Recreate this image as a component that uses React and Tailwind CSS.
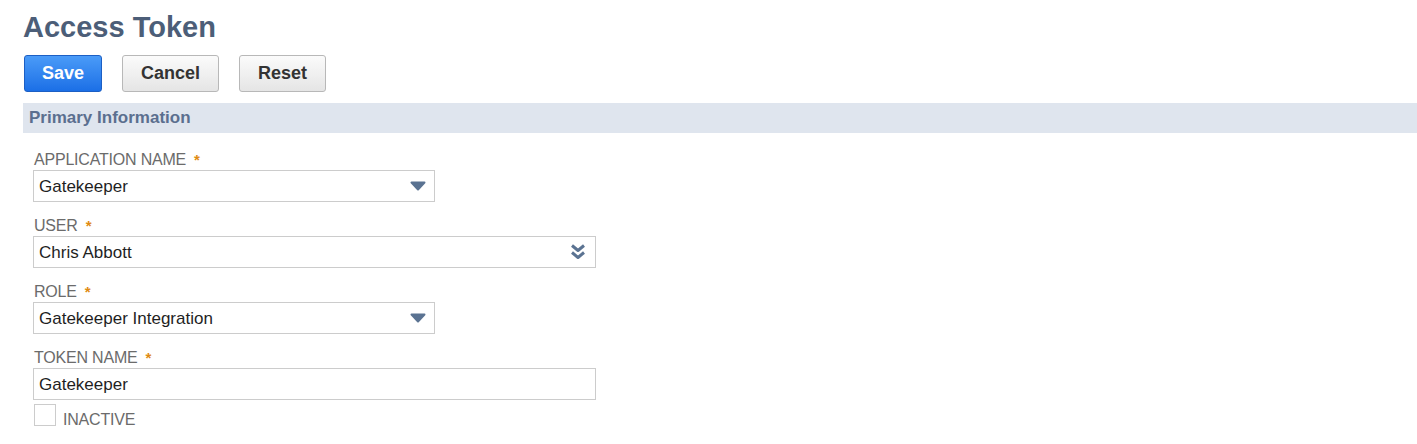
import React from 'react';

const font = { fontFamily: '"Liberation Sans", Arial, sans-serif' };

function Triangle() {
    return (
        <svg width="16" height="10" viewBox="0 0 16 10">
            <path d="M1.5 1.5 H14.5 L8 8.5 Z" fill="#5b7392" stroke="#5b7392" strokeWidth="2" strokeLinejoin="round" />
        </svg>
    );
}

function DoubleChevron() {
    return (
        <svg width="18" height="18" viewBox="0 0 18 18">
            <path d="M3 2.5 L9 7.5 L15 2.5" fill="none" stroke="#5b7392" strokeWidth="3" strokeLinejoin="round" />
            <path d="M3 9.5 L9 14.5 L15 9.5" fill="none" stroke="#5b7392" strokeWidth="3" strokeLinejoin="round" />
        </svg>
    );
}

function Field({ label, value, width, icon, first }) {
    return (
        <div className={first ? 'mt-[18px]' : 'mt-[15px]'}>
            <div className="flex items-center h-[18px] pl-[1px] text-[16px] leading-[18px] text-[#6b6b6b] tracking-[-0.2px]">
                <span>{label}</span>
                <span className="ml-[8px] text-[#e08b12] font-bold text-[15px]">*</span>
            </div>
            <div className={`mt-[1px] ${width} h-[32px] border border-[#cccccc] bg-white flex items-center justify-between pl-[5px] pr-[8px]`}>
                <span className="text-[17px] text-[#1f1f1f] translate-y-[1px]">{value}</span>
                {icon === 'select' && <Triangle />}
                {icon === 'multi' && <DoubleChevron />}
            </div>
        </div>
    );
}

export default function App() {
    return (
        <div className="bg-white min-h-[444px] pl-[23px] pt-[9px]" style={font}>
            <h1 className="text-[29px] leading-[36px] font-bold text-[#4c5e78]">Access Token</h1>
            <div className="flex items-center gap-[20px] mt-[10px] pl-[1px]">
                <button className="h-[37px] px-[17px] rounded-[3px] border border-[#1c5fc4] bg-gradient-to-b from-[#4a9bf8] to-[#1b6fe6] text-white text-[18px] font-bold">
                    Save
                </button>
                <button className="h-[37px] px-[18px] rounded-[3px] border border-[#b8b8b8] bg-gradient-to-b from-[#fbfbfb] to-[#e5e5e5] text-[#333] text-[18px] font-bold">
                    Cancel
                </button>
                <button className="h-[37px] px-[18px] rounded-[3px] border border-[#b8b8b8] bg-gradient-to-b from-[#fbfbfb] to-[#e5e5e5] text-[#333] text-[18px] font-bold">
                    Reset
                </button>
            </div>
            <div className="mt-[11px] h-[30px] bg-[#dfe5ee] flex items-center pl-[6px]">
                <span className="text-[17px] font-bold text-[#5b6f8f]">Primary Information</span>
            </div>
            <div className="pl-[10px]">
                <Field first label="APPLICATION NAME" value="Gatekeeper" width="w-[402px]" icon="select" />
                <Field label="USER" value="Chris Abbott" width="w-[563px]" icon="multi" />
                <Field label="ROLE" value="Gatekeeper Integration" width="w-[402px]" icon="select" />
                <Field label="TOKEN NAME" value="Gatekeeper" width="w-[563px]" />
                <div className="flex items-end mt-[4px]">
                    <div className="w-[22px] h-[22px] border border-[#cccccc] bg-white ml-[1px]" />
                    <span className="ml-[7px] text-[16px] leading-[18px] text-[#6b6b6b] tracking-[-0.2px] translate-y-[3px]">INACTIVE</span>
                </div>
            </div>
        </div>
    );
}
